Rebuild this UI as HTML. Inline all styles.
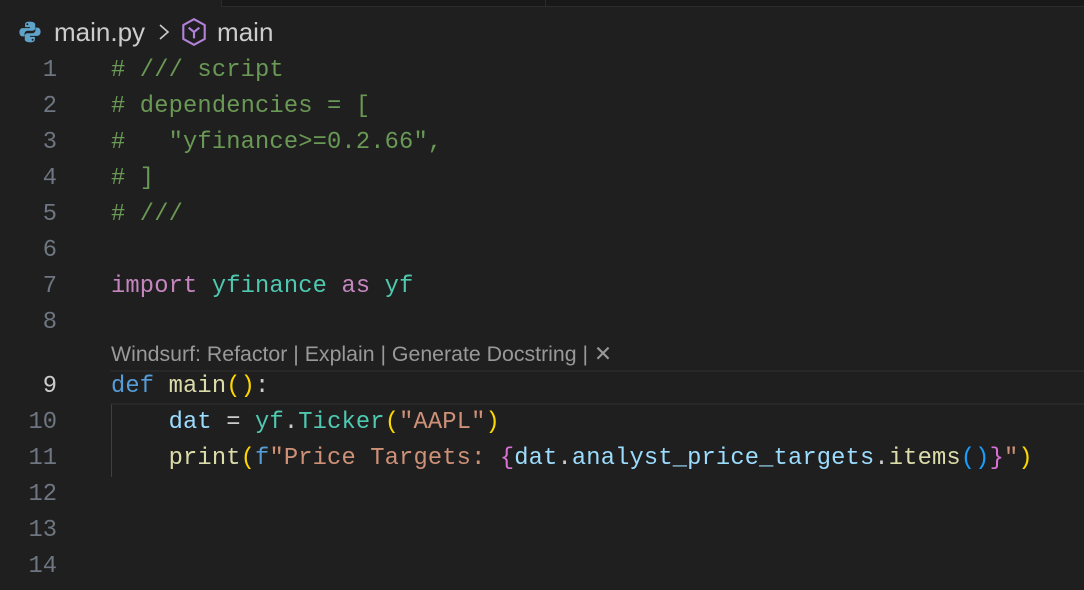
<!DOCTYPE html>
<html><head><meta charset="utf-8"><style>
body{margin:0;width:1084px;height:590px;background:#1f1f1f;overflow:hidden;position:relative;font-family:"Liberation Mono",monospace;}
.top{position:absolute;left:221px;top:0;width:863px;height:6px;background:#181818;border-left:1px solid #2b2b2b;border-bottom:1px solid #2b2b2b;}
.top2{position:absolute;left:545px;top:0;width:1px;height:6px;background:#2b2b2b}
.bc{position:absolute;top:17px;left:18px;height:30px;font-family:"Liberation Sans",sans-serif;font-size:26px;color:#cccccc;display:flex;align-items:center;}
.ln{position:absolute;left:0;width:57px;text-align:right;font-size:23.75px;color:#6e7681;line-height:36px;}
.code{position:absolute;left:111px;font-size:23.75px;line-height:36px;white-space:pre;color:#cccccc;letter-spacing:0.15px;}
.c{color:#6a9955}.k{color:#c586c0}.t{color:#4ec9b0}.b{color:#569cd6}.f{color:#dcdcaa}.v{color:#9cdcfe}.s{color:#ce9178}.y{color:#ffd700}.p{color:#da70d6}.bl{color:#179fff}
.hl{position:absolute;left:110px;right:0;top:370px;height:31px;border-top:2px solid #282828;border-bottom:2px solid #282828;}
.guide{position:absolute;left:111px;top:405px;width:1px;height:72px;background:#404040}
.lens{position:absolute;left:111px;top:342px;font-family:"Liberation Sans",sans-serif;font-size:21.3px;color:#999999;}
</style></head><body>
<div class="top"></div><div class="top2"></div>
<div class="bc">
<svg width="24" height="24" viewBox="0 0 22 22" style="margin-right:12px"><path d="M10.5 1.5c-4 0-4 1.8-4 2.8V6.5h4.5v1H4.2C2.5 7.5 1.3 9 1.3 11.2s1.2 3.8 2.9 3.8H6V12.7c0-1.7 1.4-2.9 3-2.9h4.3c1.4 0 2.5-1.1 2.5-2.5V4.3c0-1.4-1.2-2.8-5.3-2.8z" fill="#5fa3c9"/><path d="M11.5 20.5c4 0 4-1.8 4-2.8v-2.2H11v-1h6.8c1.7 0 2.9-1.5 2.9-3.7s-1.2-3.8-2.9-3.8H16v2.3c0 1.7-1.4 2.9-3 2.9H8.7c-1.4 0-2.5 1.1-2.5 2.5v3c0 1.4 1.2 2.8 5.3 2.8z" fill="#5fa3c9"/><circle cx="8.6" cy="3.9" r="0.9" fill="#1f1f1f"/><circle cx="13.4" cy="18.1" r="0.9" fill="#1f1f1f"/></svg>
<span>main.py</span>
<svg width="18" height="26" viewBox="0 0 18 26" style="margin:0 6px 0 10px"><path d="M5 6l8 7-8 7" stroke="#cccccc" stroke-width="1.6" fill="none"/></svg>
<svg width="30" height="30" viewBox="0 0 26 28" style="margin-right:8px"><path d="M13 2l10 5.5v13L13 26 3 20.5v-13z" stroke="#b180d7" stroke-width="2" fill="none" stroke-linejoin="round"/><path d="M8 10l5 4 5-4M13 14v6" stroke="#b180d7" stroke-width="2" fill="none"/></svg>
<span>main</span>
</div>
<div class="hl"></div><div class="guide"></div>
<div class="lens">Windsurf: Refactor | Explain | Generate Docstring | ✕</div>
<div class="ln" style="top:53px">1<br>2<br>3<br>4<br>5<br>6<br>7<br>8</div>
<div class="ln" style="top:369px"><span style="color:#cccccc">9</span><br>10<br>11<br>12<br>13<br>14</div>
<div class="code" style="top:53px"><span class="c"># /// script</span>
<span class="c"># dependencies = [</span>
<span class="c">#   "yfinance&gt;=0.2.66",</span>
<span class="c"># ]</span>
<span class="c"># ///</span>

<span class="k">import</span> <span class="t">yfinance</span> <span class="k">as</span> <span class="t">yf</span>
</div>
<div class="code" style="top:369px"><span class="b">def</span> <span class="f">main</span><span class="y">()</span>:
    <span class="v">dat</span> = <span class="t">yf</span>.<span class="t">Ticker</span><span class="y">(</span><span class="s">"AAPL"</span><span class="y">)</span>
    <span class="f">print</span><span class="y">(</span><span class="b">f</span><span class="s">"Price Targets: </span><span class="p">{</span><span class="v">dat</span>.<span class="v">analyst_price_targets</span>.<span class="f">items</span><span class="bl">()</span><span class="p">}</span><span class="s">"</span><span class="y">)</span></div>
</body></html>
